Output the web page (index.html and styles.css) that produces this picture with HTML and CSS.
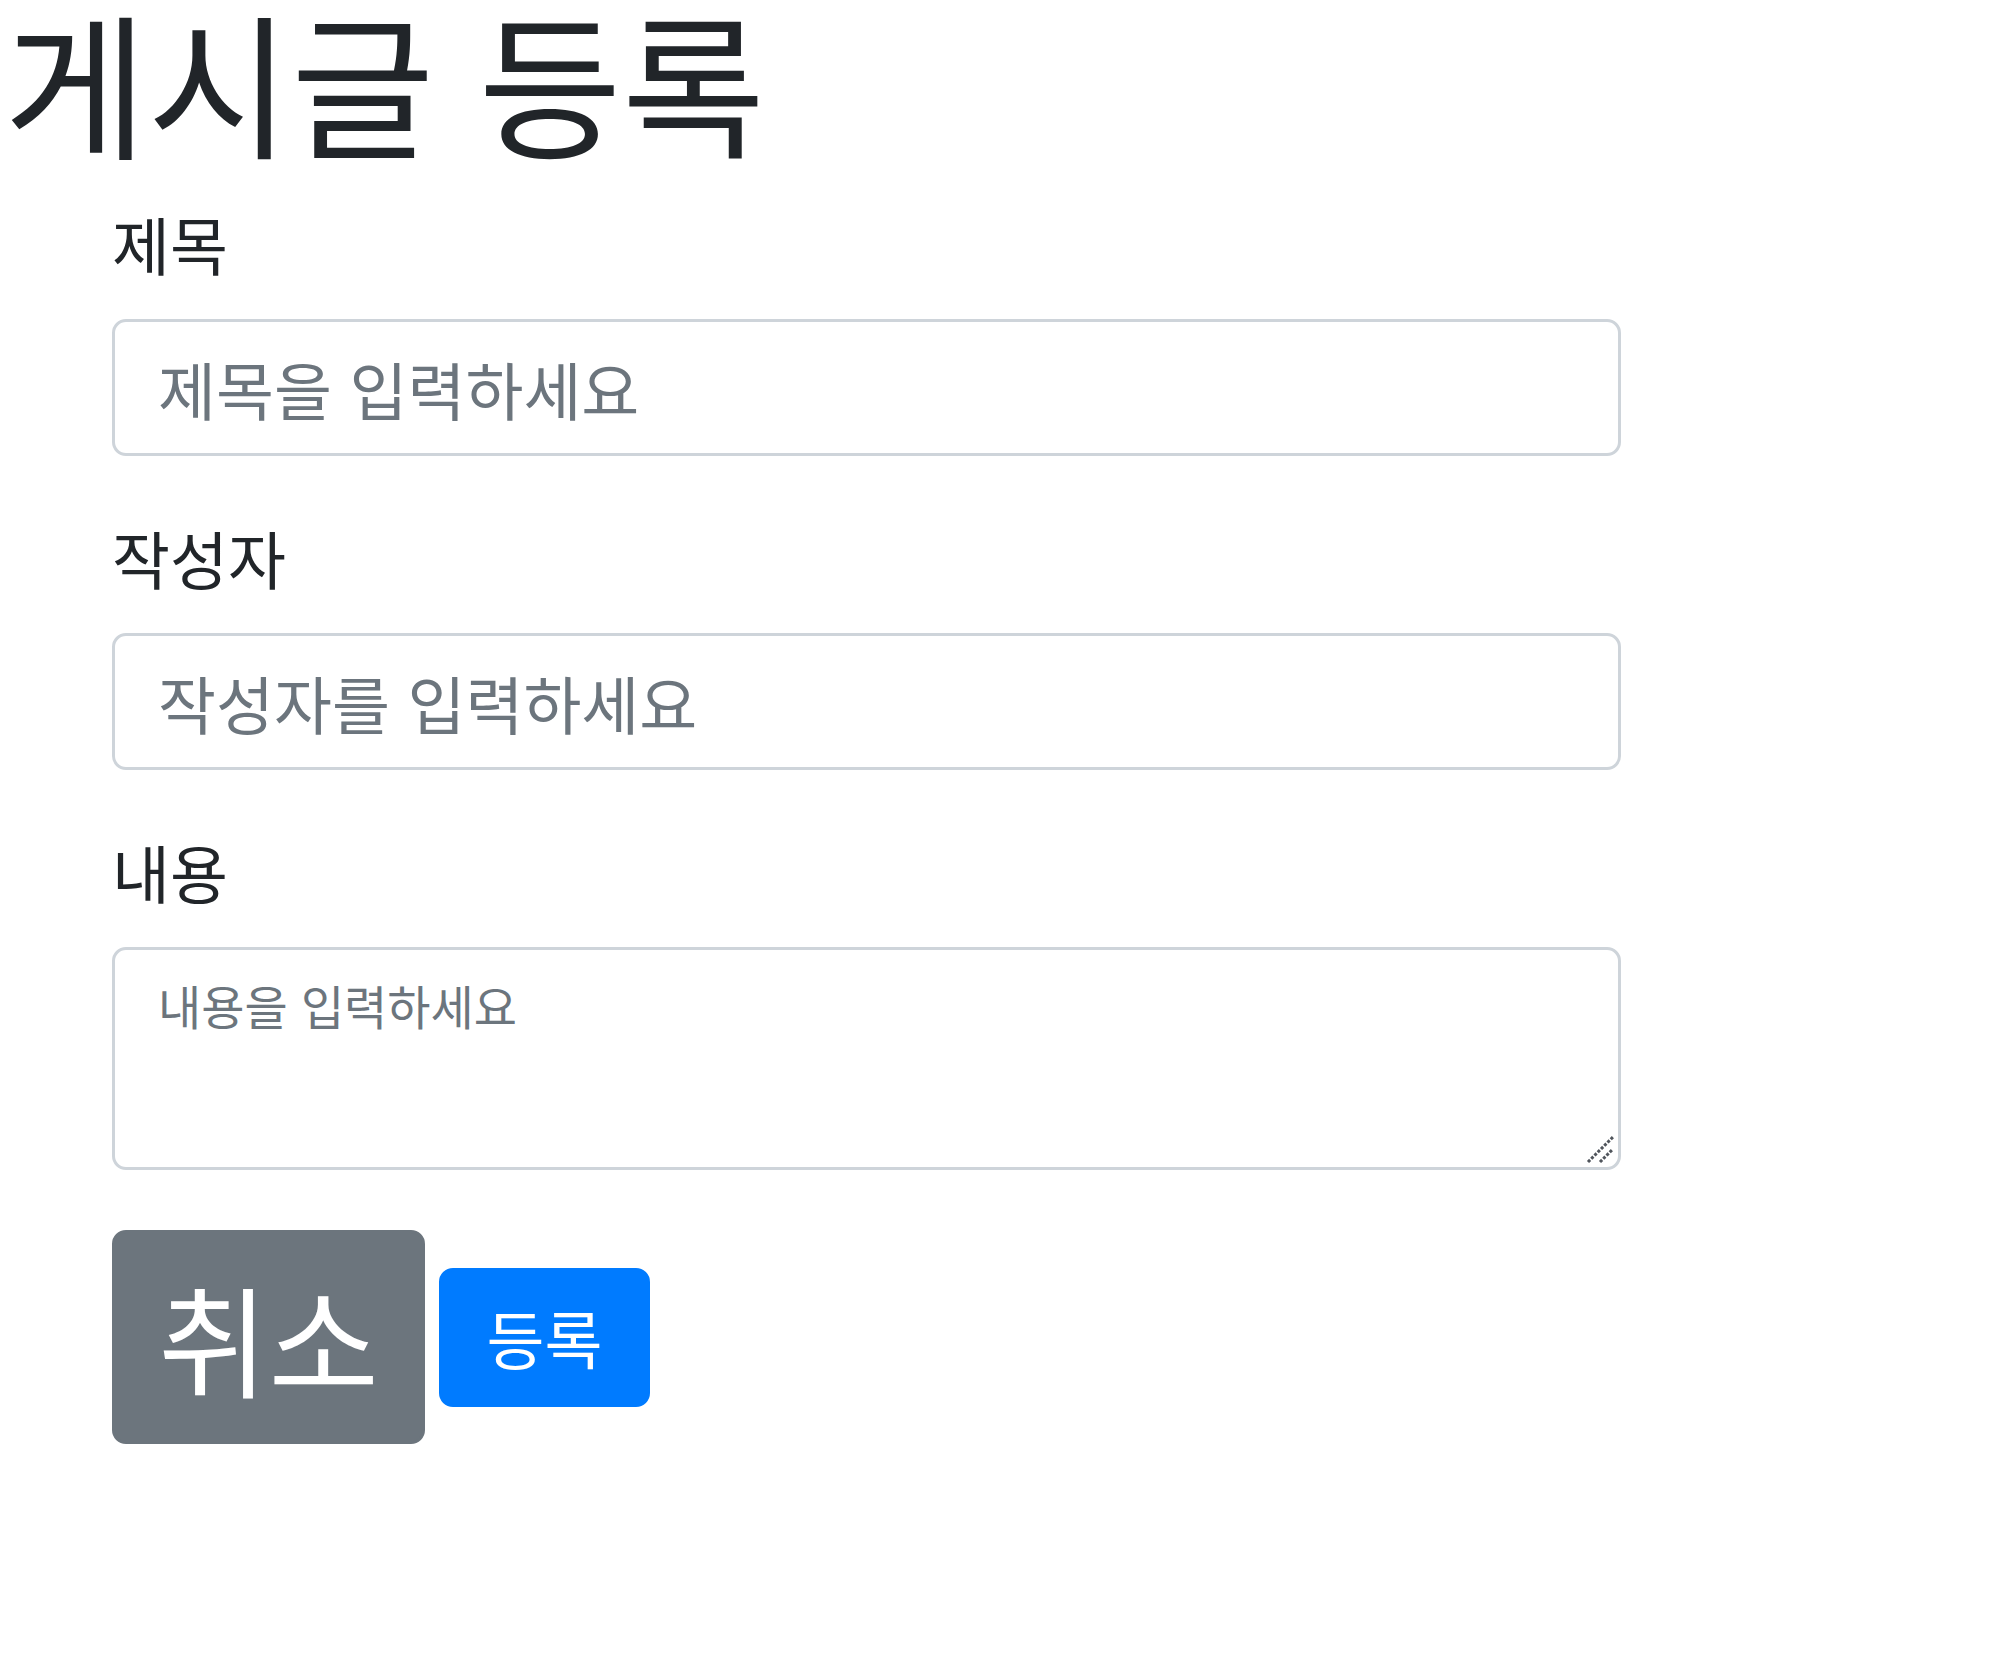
FILE: index.html
```html
<!DOCTYPE html>
<html lang="ko">
<head>
<meta charset="utf-8">
<title>게시글 등록</title>
<link rel="stylesheet" href="styles.css">
</head>
<body>
<h1 class="page-title">게시글 등록</h1>
<form class="post-form">
  <div class="form-group">
    <label class="form-label" for="title">제목</label>
    <input class="form-control" id="title" type="text" placeholder="제목을 입력하세요">
  </div>
  <div class="form-group">
    <label class="form-label" for="writer">작성자</label>
    <input class="form-control" id="writer" type="text" placeholder="작성자를 입력하세요">
  </div>
  <div class="form-group">
    <label class="form-label" for="content">내용</label>
    <div class="textarea-wrap">
      <textarea class="form-control form-textarea" id="content" placeholder="내용을 입력하세요"></textarea>
      <svg class="grip" width="30" height="30" viewBox="0 0 30 30" aria-hidden="true">
        <line x1="3" y1="28" x2="28" y2="3" stroke="#50555c" stroke-width="3" stroke-dasharray="3 1.6"/>
        <line x1="15" y1="28" x2="28" y2="15" stroke="#50555c" stroke-width="3" stroke-dasharray="3 1.6"/>
      </svg>
    </div>
  </div>
  <div class="actions">
    <button type="button" class="btn btn-secondary btn-big">취소</button>
    <button type="submit" class="btn btn-primary">등록</button>
  </div>
</form>
</body>
</html>
```
FILE: styles.css
```css
html, body {
  margin: 0;
  padding: 0;
  background: #ffffff;
}
body {
  font-family: "Noto Sans CJK KR", "Noto Sans", sans-serif;
  color: #212529;
}
.page-title {
  margin: 0 0 44px 4px;
  font-size: 156px;
  font-weight: 400;
  line-height: 158px;
  color: #212529;
  white-space: nowrap;
}
.post-form {
  padding-left: 112px;
  width: 1509px;
}
.form-group {
  margin-bottom: 60px;
}
.form-label {
  display: block;
  font-size: 63px;
  line-height: 82px;
  margin-bottom: 35px;
  color: #212529;
}
.form-control {
  display: block;
  box-sizing: border-box;
  width: 1509px;
  height: 137px;
  padding: 20px 43px;
  font-family: "Noto Sans CJK KR", "Noto Sans", sans-serif;
  font-size: 63px;
  color: #495057;
  background: #fff;
  border: 3px solid #ced4da;
  border-radius: 14px;
  outline: none;
  margin: 0;
}
.form-control::placeholder {
  color: #6c757d;
  opacity: 1;
}
.textarea-wrap {
  position: relative;
  width: 1509px;
}
.form-textarea {
  height: 223px;
  resize: none;
  font-size: 47px;
  line-height: 66px;
  padding: 22px 43px;
}
.grip {
  position: absolute;
  right: 6px;
  bottom: 6px;
}
.actions {
  display: flex;
  align-items: center;
  gap: 14px;
}
.btn {
  box-sizing: border-box;
  font-family: "Noto Sans CJK KR", "Noto Sans", sans-serif;
  font-size: 63px;
  line-height: 86px;
  padding: 22px 0;
  border: 3px solid transparent;
  border-radius: 14px;
  color: #fff;
  margin: 0;
  text-align: center;
  cursor: pointer;
}
.btn-secondary {
  background: #6c757d;
  border-color: #6c757d;
}
.btn-big {
  font-size: 120px;
  line-height: 162px;
  padding: 23px 0;
  width: 313px;
  height: 214px;
}
.btn-primary {
  background: #007bff;
  border-color: #007bff;
  width: 211px;
  height: 139px;
}
```
